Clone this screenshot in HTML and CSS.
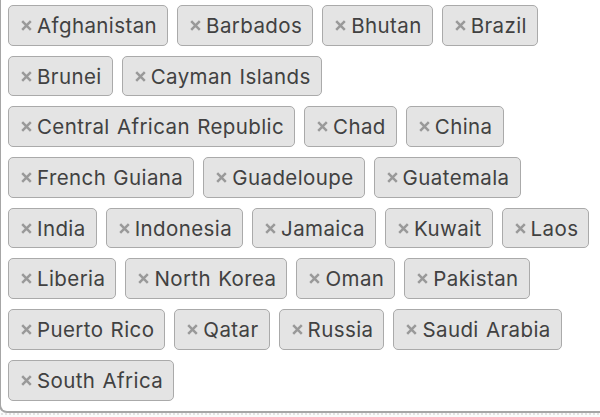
FILE: index.html
```html
<!DOCTYPE html>
<html lang="en">
<head>
  <meta charset="UTF-8">
  <title>Country Select</title>
  <link rel="stylesheet" href="styles.css">
</head>
<body>

  <div class="selection">
    <ul class="choices">
      <li class="choice"><svg class="remove" viewBox="0 0 11 11"><path d="M1.2 1.2L9.8 9.8M9.8 1.2L1.2 9.8"/></svg>Afghanistan</li>
      <li class="choice"><svg class="remove" viewBox="0 0 11 11"><path d="M1.2 1.2L9.8 9.8M9.8 1.2L1.2 9.8"/></svg>Barbados</li>
      <li class="choice"><svg class="remove" viewBox="0 0 11 11"><path d="M1.2 1.2L9.8 9.8M9.8 1.2L1.2 9.8"/></svg>Bhutan</li>
      <li class="choice"><svg class="remove" viewBox="0 0 11 11"><path d="M1.2 1.2L9.8 9.8M9.8 1.2L1.2 9.8"/></svg>Brazil</li>
      <li class="choice"><svg class="remove" viewBox="0 0 11 11"><path d="M1.2 1.2L9.8 9.8M9.8 1.2L1.2 9.8"/></svg>Brunei</li>
      <li class="choice"><svg class="remove" viewBox="0 0 11 11"><path d="M1.2 1.2L9.8 9.8M9.8 1.2L1.2 9.8"/></svg>Cayman Islands</li>
      <li class="choice"><svg class="remove" viewBox="0 0 11 11"><path d="M1.2 1.2L9.8 9.8M9.8 1.2L1.2 9.8"/></svg>Central African Republic</li>
      <li class="choice"><svg class="remove" viewBox="0 0 11 11"><path d="M1.2 1.2L9.8 9.8M9.8 1.2L1.2 9.8"/></svg>Chad</li>
      <li class="choice"><svg class="remove" viewBox="0 0 11 11"><path d="M1.2 1.2L9.8 9.8M9.8 1.2L1.2 9.8"/></svg>China</li>
      <li class="choice"><svg class="remove" viewBox="0 0 11 11"><path d="M1.2 1.2L9.8 9.8M9.8 1.2L1.2 9.8"/></svg>French Guiana</li>
      <li class="choice"><svg class="remove" viewBox="0 0 11 11"><path d="M1.2 1.2L9.8 9.8M9.8 1.2L1.2 9.8"/></svg>Guadeloupe</li>
      <li class="choice"><svg class="remove" viewBox="0 0 11 11"><path d="M1.2 1.2L9.8 9.8M9.8 1.2L1.2 9.8"/></svg>Guatemala</li>
      <li class="choice"><svg class="remove" viewBox="0 0 11 11"><path d="M1.2 1.2L9.8 9.8M9.8 1.2L1.2 9.8"/></svg>India</li>
      <li class="choice"><svg class="remove" viewBox="0 0 11 11"><path d="M1.2 1.2L9.8 9.8M9.8 1.2L1.2 9.8"/></svg>Indonesia</li>
      <li class="choice"><svg class="remove" viewBox="0 0 11 11"><path d="M1.2 1.2L9.8 9.8M9.8 1.2L1.2 9.8"/></svg>Jamaica</li>
      <li class="choice"><svg class="remove" viewBox="0 0 11 11"><path d="M1.2 1.2L9.8 9.8M9.8 1.2L1.2 9.8"/></svg>Kuwait</li>
      <li class="choice"><svg class="remove" viewBox="0 0 11 11"><path d="M1.2 1.2L9.8 9.8M9.8 1.2L1.2 9.8"/></svg>Laos</li>
      <li class="choice"><svg class="remove" viewBox="0 0 11 11"><path d="M1.2 1.2L9.8 9.8M9.8 1.2L1.2 9.8"/></svg>Liberia</li>
      <li class="choice"><svg class="remove" viewBox="0 0 11 11"><path d="M1.2 1.2L9.8 9.8M9.8 1.2L1.2 9.8"/></svg>North Korea</li>
      <li class="choice"><svg class="remove" viewBox="0 0 11 11"><path d="M1.2 1.2L9.8 9.8M9.8 1.2L1.2 9.8"/></svg>Oman</li>
      <li class="choice"><svg class="remove" viewBox="0 0 11 11"><path d="M1.2 1.2L9.8 9.8M9.8 1.2L1.2 9.8"/></svg>Pakistan</li>
      <li class="choice"><svg class="remove" viewBox="0 0 11 11"><path d="M1.2 1.2L9.8 9.8M9.8 1.2L1.2 9.8"/></svg>Puerto Rico</li>
      <li class="choice"><svg class="remove" viewBox="0 0 11 11"><path d="M1.2 1.2L9.8 9.8M9.8 1.2L1.2 9.8"/></svg>Qatar</li>
      <li class="choice"><svg class="remove" viewBox="0 0 11 11"><path d="M1.2 1.2L9.8 9.8M9.8 1.2L1.2 9.8"/></svg>Russia</li>
      <li class="choice"><svg class="remove" viewBox="0 0 11 11"><path d="M1.2 1.2L9.8 9.8M9.8 1.2L1.2 9.8"/></svg>Saudi Arabia</li>
      <li class="choice"><svg class="remove" viewBox="0 0 11 11"><path d="M1.2 1.2L9.8 9.8M9.8 1.2L1.2 9.8"/></svg>South Africa</li>
    </ul>
  </div>

</body>
</html>
```

FILE: styles.css
```css
html {
  background-color: #fbfbfb;
  background-image: radial-gradient(#e2e2e2 1px, transparent 1px);
  background-size: 4px 4px;
}

body {
  margin: 0;
  overflow: hidden;
  height: 417px;
  font-family: Inter, "Noto Sans", sans-serif;
}

.selection {
  margin-left: -1px;
  margin-right: -20px;
  background: white;
  border: 2px solid #a6a6a6;
  border-top: none;
  border-radius: 0 0 8px 8px;
  padding: 5px 0 10px 7px;
}

.choices {
  list-style: none;
  margin: 0;
  padding: 0;
  display: flex;
  flex-wrap: wrap;
  gap: 10px 9px;
  width: 592px;
}

.choice {
  display: flex;
  align-items: center;
  height: 38.7px;
  background-color: #e4e4e4;
  border: 1px solid #aaa;
  border-radius: 5px;
  padding: 0 10px 0 12px;
  font-size: 20.5px;
  letter-spacing: 0.4px;
  word-spacing: 1px;
  color: #414141;
}

.remove {
  width: 11px;
  height: 11px;
  margin-right: 5px;
  fill: none;
  stroke: #999;
  stroke-width: 2.5;
}
```
